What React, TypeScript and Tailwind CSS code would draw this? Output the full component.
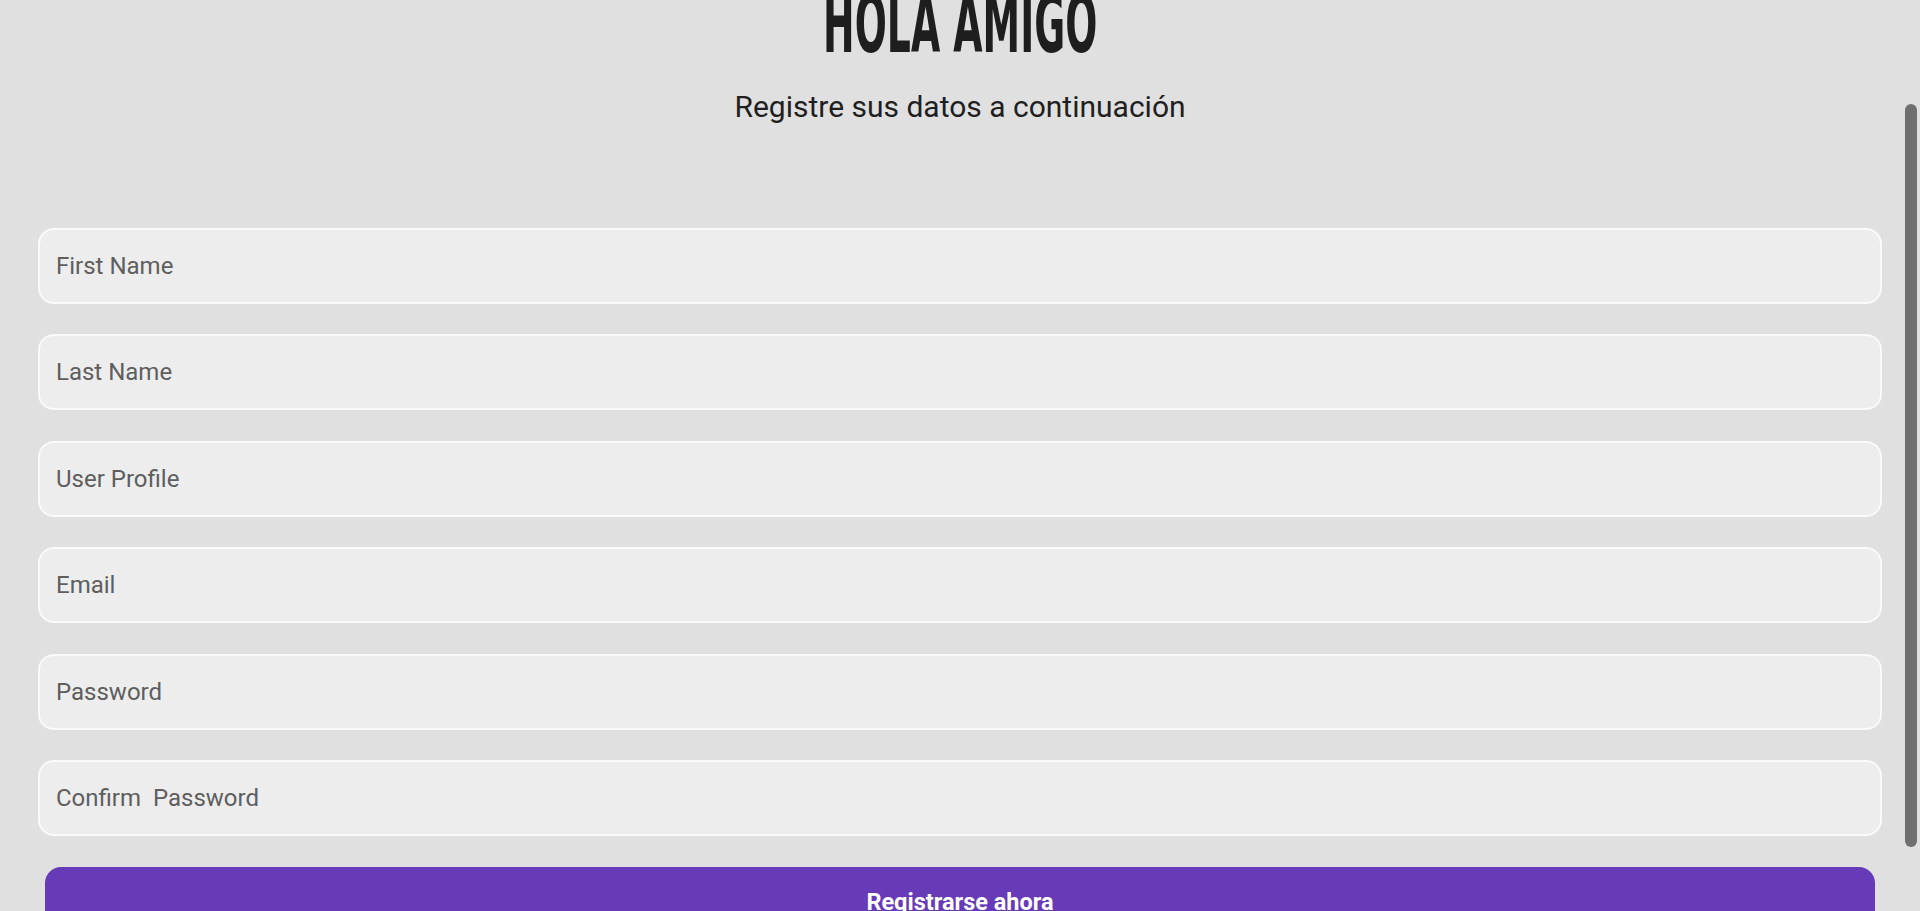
import React from "react";

const fields = [
  { name: "firstName", placeholder: "First Name", type: "text" },
  { name: "lastName", placeholder: "Last Name", type: "text" },
  { name: "profile", placeholder: "User Profile", type: "text" },
  { name: "email", placeholder: "Email", type: "email" },
  { name: "password", placeholder: "Password", type: "password" },
  { name: "confirm", placeholder: "Confirm  Password", type: "password" },
];

const App = () => {
  return (
    <div className="relative h-[911px] overflow-hidden bg-[#e0e0e0] font-['Roboto',sans-serif]">
      <div className="flex flex-col px-[38px]">
        <header className="flex flex-col items-center pt-[15px]">
          <h1 className="h-[50px] origin-bottom scale-x-[0.84] scale-y-[1.6] font-['Liberation_Sans_Narrow','DejaVu_Sans_Condensed',sans-serif] text-[50px] font-bold leading-[50px] text-[#1e1e1e]">
            HOLA AMIGO
          </h1>
          <p className="mt-[23.5px] text-[30px] leading-[36px] text-[#1f1f1f]">
            Registre sus datos a continuación
          </p>
        </header>

        <form className="mt-[103px] flex flex-col gap-[30.6px]" onSubmit={(e) => e.preventDefault()}>
          {fields.map((field) => (
            <input
              key={field.name}
              name={field.name}
              type={field.type}
              placeholder={field.placeholder}
              className="h-[76px] w-full rounded-2xl border-2 border-[#fafafa] bg-[#ededed] px-4 text-[24px] text-[#333] outline-none placeholder:text-[#5e5e5e] whitespace-pre"
            />
          ))}
          <div className="px-[7px]">
            <button
              type="submit"
              className="flex h-[72px] w-full items-center justify-center rounded-2xl bg-[#673ab7] text-[23.5px] font-bold text-white"
            >
              Registrarse ahora
            </button>
          </div>
        </form>
      </div>

      {/* overlay scrollbar thumb */}
      <div className="absolute right-[3px] top-[104px] h-[743px] w-[12px] rounded-full bg-[#6f6f6f]" />
    </div>
  );
};

export default App;
